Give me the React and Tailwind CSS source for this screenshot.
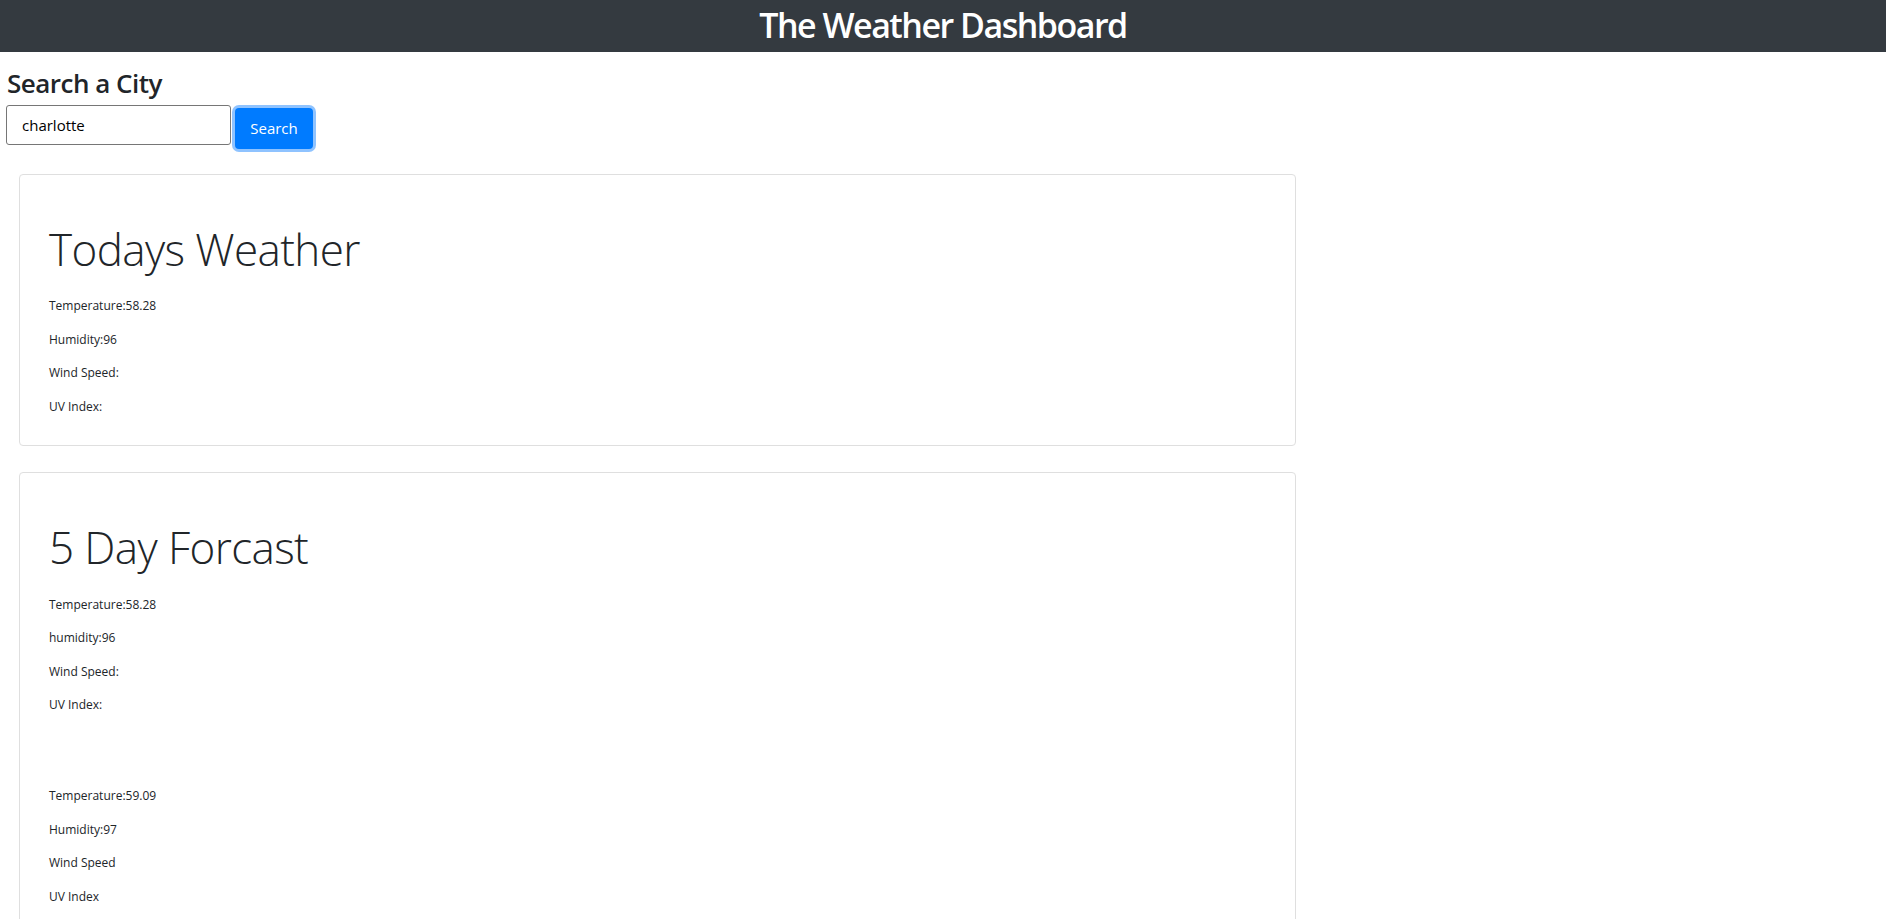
import React from "react";

function Line({ children }) {
  return <p className="text-[12px] leading-[19px] mb-[14.5px] last:mb-0">{children}</p>;
}

function Card({ title, children }) {
  return (
    <div className="ml-[19px] w-[1277px] border border-[#dfdfdf] rounded-[4px] bg-white pl-[29px] pr-[28px] pt-[48px] pb-[29px]">
      <h2 className="text-[44px] font-light leading-[1.2] mb-[21px] text-[#212529] tracking-[-0.6px]">{title}</h2>
      {children}
    </div>
  );
}

export default function App() {
  return (
    <div className="min-h-[919px] bg-white text-[#212529] font-['Open_Sans',sans-serif]">
      <header className="h-[52px] bg-[#343a40] flex items-center justify-center">
        <h1 className="text-white text-[34px] font-semibold leading-[1.2] tracking-[-1.5px] -mt-[2px]">The Weather Dashboard</h1>
      </header>
      <div className="px-[6px] pt-[15.5px]">
        <h3 className="text-[26px] font-semibold leading-[1.2] pl-[1px] tracking-[-0.5px]">Search a City</h3>
        <div className="flex items-start mt-[6px]">
          <input
            defaultValue="charlotte"
            className="w-[225px] h-[40px] border border-[#767676] rounded-[3px] px-[15px] text-[15px] text-black outline-none"
          />
          <button className="ml-[4px] mt-[3px] w-[78px] h-[41px] bg-[#007bff] text-white text-[15px] rounded-[4px] ring-[3px] ring-[#8fc3ff]">
            Search
          </button>
        </div>
      </div>
      <div className="mt-[25px] flex flex-col gap-[26px]">
        <Card title="Todays Weather">
          <Line>Temperature:58.28</Line>
          <Line>Humidity:96</Line>
          <Line>Wind Speed:</Line>
          <Line>UV Index:</Line>
        </Card>
        <Card title="5 Day Forcast">
          <div>
            <Line>Temperature:58.28</Line>
            <Line>humidity:96</Line>
            <Line>Wind Speed:</Line>
            <Line>UV Index:</Line>
          </div>
          <div className="mt-[72px]">
            <Line>Temperature:59.09</Line>
            <Line>Humidity:97</Line>
            <Line>Wind Speed</Line>
            <Line>UV Index</Line>
          </div>
        </Card>
      </div>
    </div>
  );
}
